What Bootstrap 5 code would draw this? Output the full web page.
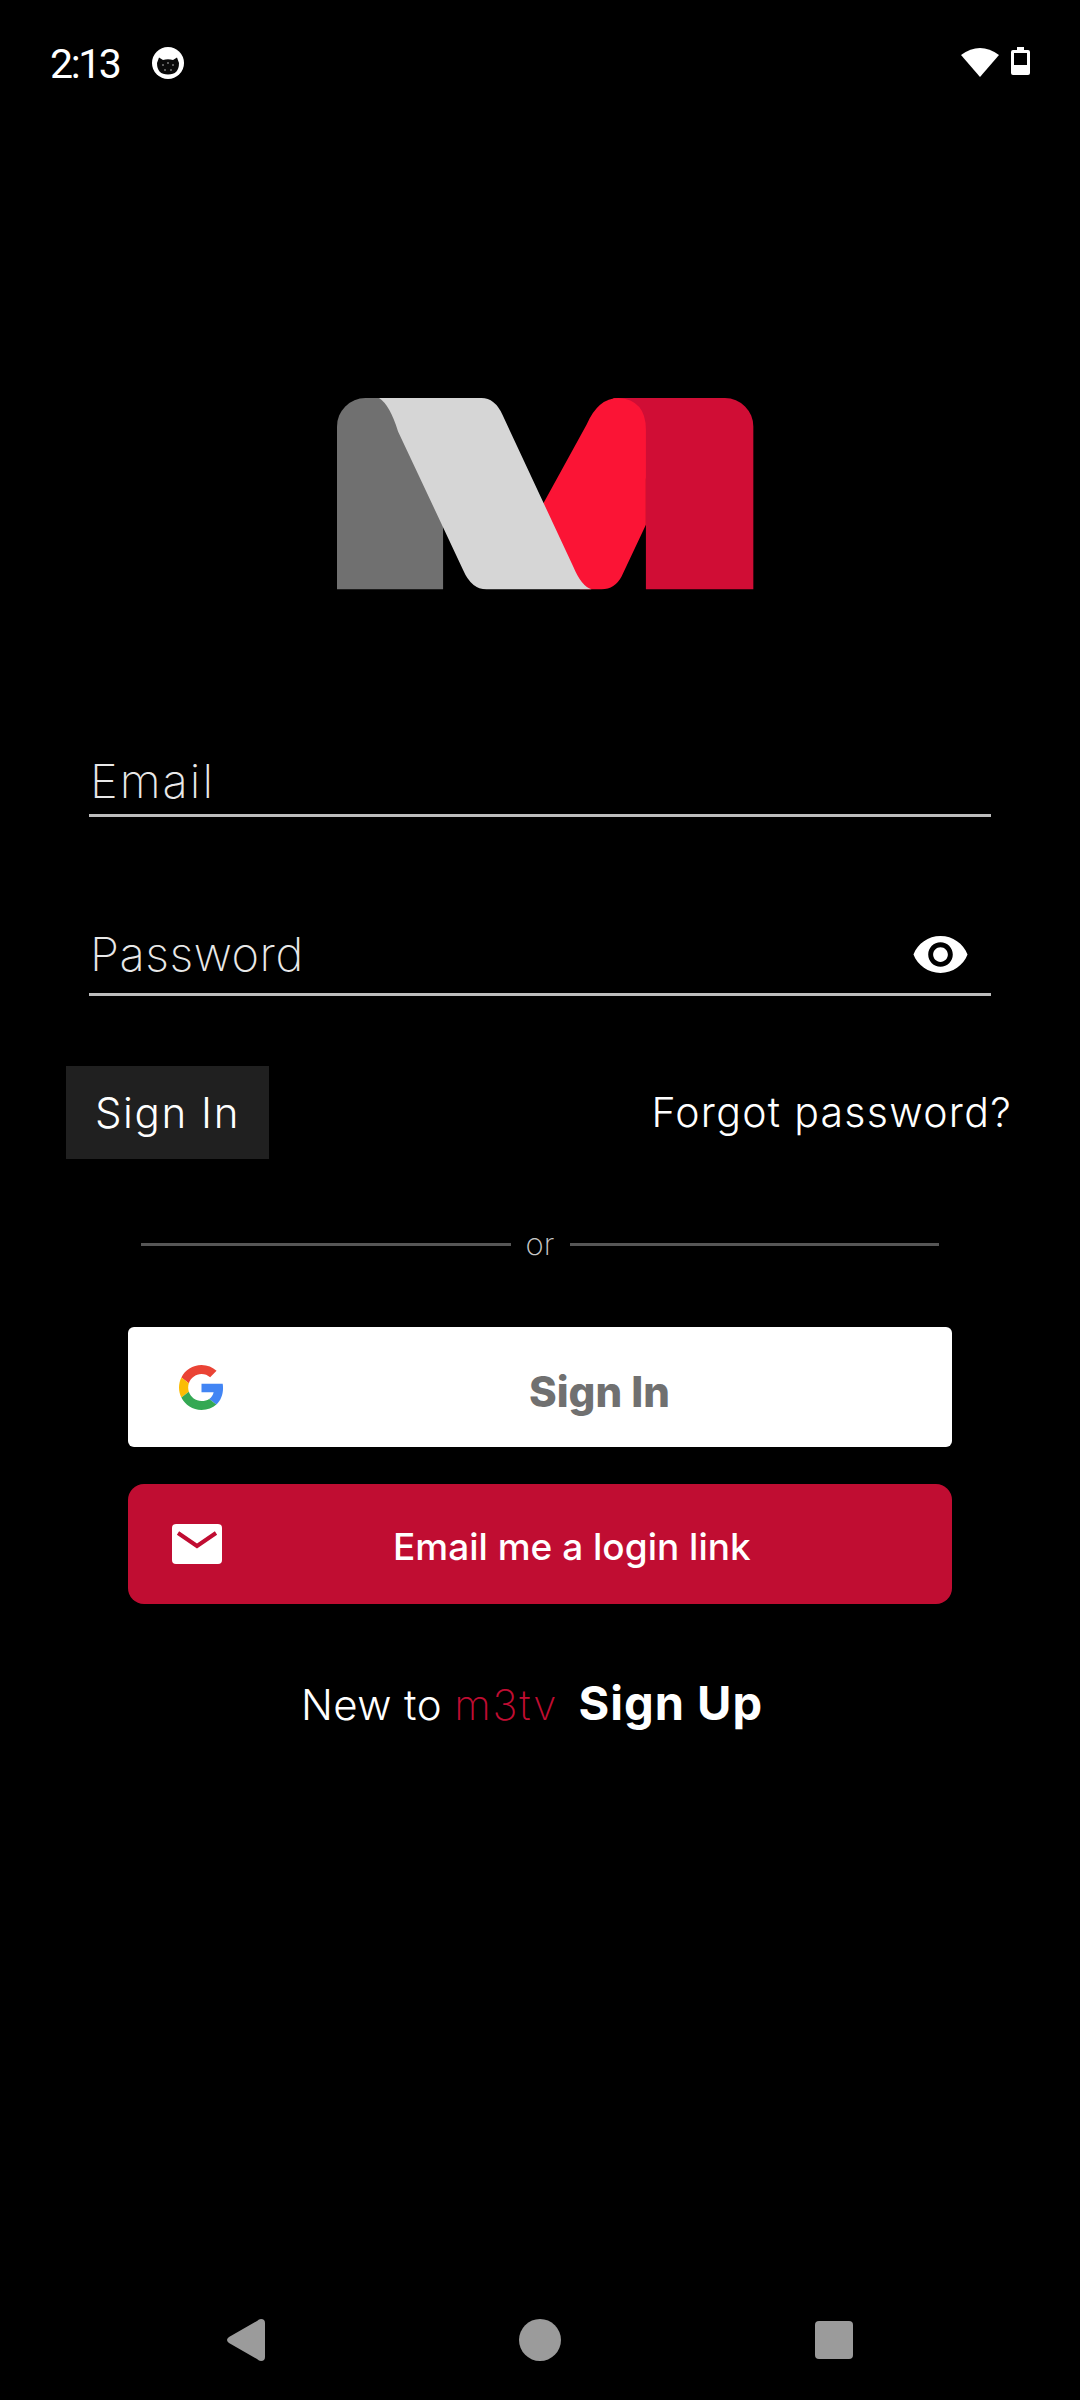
<!DOCTYPE html>
<html lang="en">
<head>
    <meta charset="UTF-8">
    <meta name="viewport" content="width=device-width, initial-scale=1.0">
    <title>m3tv Sign In</title>
    <link href="https://cdn.jsdelivr.net/npm/bootstrap@5.3.0/dist/css/bootstrap.min.css" rel="stylesheet">
    <style>
        body { background: #000; color: #fff; font-family: "Inter", "Liberation Sans", sans-serif; font-weight: 300; height: 2400px; overflow: hidden; }
        .screen { height: 2400px; }
        .status-bar { height: 120px; padding: 47px 50px 0 50px; }
        .clock { font-family: "Roboto", sans-serif; font-size: 41px; font-weight: 400; line-height: 34px; width: 102px; letter-spacing: -2.4px; }
        .logo-wrap { padding-top: 278px; height: 603px; padding-left: 337px; }
        .field-row { margin-left: 89px; width: 902px; border-bottom: 3px solid #bdbdbd; font-size: 47px; font-weight: 200; color: #e8e8e8; line-height: 60px; padding-left: 1px; }
        .field-email { height: 94px; padding-top: 28px; letter-spacing: 2px; }
        .field-password { margin-top: 98px; height: 81px; padding-top: 0; padding-right: 21px; letter-spacing: .5px; }
        .action-row { margin-top: 70px; padding-left: 66px; padding-right: 68px; }
        .btn-signin { background: #202020; color: #fff; border: 0; border-radius: 0; font-size: 42px; font-weight: 300; width: 203px; height: 93px; padding: 0; line-height: 1; letter-spacing: 1.6px; --bs-btn-hover-bg: #202020; --bs-btn-hover-color: #fff; }
        .forgot { font-size: 41px; color: #fff; text-decoration: none; letter-spacing: 1.3px; }
        .divider { margin-top: 65px; padding: 0 141px; height: 40px; color: #c8c8c8; font-size: 31px; font-weight: 200; }
        .divider-line { flex: 1; height: 3px; background: #565656; }
        .divider-text { width: 59px; text-align: center; line-height: 40px; }
        .wide-btn { width: 824px; height: 120px; margin-left: 128px; padding: 0; border: 0; }
        .btn-google { margin-top: 63px; background: #fff; color: #707070; border-radius: 6px; padding-left: 51px; font-weight: 800; font-size: 42px; --bs-btn-hover-bg: #fff; --bs-btn-hover-color: #707070; }
        .btn-google-label { margin-left: 305px; padding-top: 8px; }
        .btn-mail { margin-top: 37px; background: #c00d32; color: #fff; border-radius: 16px; padding-left: 44px; font-weight: 500; font-size: 37px; --bs-btn-hover-bg: #c00d32; --bs-btn-hover-color: #fff; }
        .btn-mail-label { margin-left: 171px; padding-top: 5px; }
        .signup-row { margin-top: 71px; padding-left: 301px; font-size: 42px; line-height: 56px; letter-spacing: .4px; }
        .brand-word { color: #c00d32; font-weight: 200; letter-spacing: 1.8px; }
        .signup-link { color: #fff; font-weight: 700; font-size: 47px; letter-spacing: 1px; text-decoration: none; margin-left: 8px; }
        .nav-bar { height: 82px; margin-bottom: 19px; }
    </style>
</head>
<body>
    <div class="screen d-flex flex-column">
        <div class="status-bar d-flex align-items-start flex-shrink-0">
            <div class="clock">2:13</div>
            <svg width="32" height="32" viewBox="0 0 32 32">
                <circle cx="16" cy="16" r="16" fill="#fff"/>
                <path d="M5 16 L7 10.500 L11 13 Q16 11.500 21 13 L25 10.500 L27 16 Q27 27.500 16 27.500 Q5 27.500 5 16 Z" fill="#0a0a0a"/>
                <g fill="#777"><circle cx="11" cy="18" r="1"/><circle cx="16" cy="16" r="1"/><circle cx="21" cy="18" r="1"/><circle cx="13" cy="23" r="1"/><circle cx="19" cy="23" r="1"/></g>
            </svg>
            <div class="ms-auto d-flex gap-2">
                <svg width="38" height="31" viewBox="0 0 38 31"><path d="M0 8 Q19 -6 38 8 L19 30 Z" fill="#fff"/></svg>
                <svg width="19" height="28" viewBox="0 0 19 28" class="ms-1"><path fill-rule="evenodd" d="M6 0 H13 V3 H17 Q19 3 19 5 V26 Q19 28 17 28 H2 Q0 28 0 26 V5 Q0 3 2 3 H6 Z M3 6 V18 H16 V6 Z" fill="#fff"/></svg>
            </div>
        </div>

        <div class="logo-wrap flex-shrink-0">
            <svg width="417" height="192" viewBox="52 55 1250 575">
                <path d="M880 55 H1215 A85 85 0 0 1 1300 140 V628 H978 V300 Z" fill="#d00d35"/>
                <path d="M660 390 L800 135 Q835 55 895 55 Q978 60 978 150 V435 L905 590 Q885 628 845 628 H780 Z" fill="#fb1435"/>
                <path d="M52 628 V140 A85 85 0 0 1 137 55 H250 L370 430 V628 Z" fill="#707070"/>
                <path d="M178 55 H485 Q525 55 548 105 L760 560 Q785 620 815 628 H500 Q455 628 430 570 L235 155 Q210 75 178 55 Z" fill="#d6d6d6"/>
            </svg>
        </div>

        <label class="field-row field-email d-block flex-shrink-0">Email</label>
        <div class="field-row field-password d-flex justify-content-between align-items-center flex-shrink-0">
            <label>Password</label>
            <svg width="59" height="59" viewBox="0 0 24 24"><path fill="#fff" d="M12 4.500C7 4.500 2.730 7.610 1 12c1.730 4.390 6 7.500 11 7.500s9.270-3.110 11-7.500c-1.730-4.390-6-7.500-11-7.500zM12 17c-2.760 0-5-2.240-5-5s2.240-5 5-5 5 2.240 5 5-2.240 5-5 5zm0-8c-1.660 0-3 1.340-3 3s1.340 3 3 3 3-1.340 3-3-1.340-3-3-3z"/></svg>
        </div>

        <div class="action-row d-flex justify-content-between align-items-center flex-shrink-0">
            <button type="button" class="btn btn-signin">Sign In</button>
            <a href="#" class="forgot">Forgot password?</a>
        </div>

        <div class="divider d-flex align-items-center flex-shrink-0">
            <div class="divider-line"></div>
            <div class="divider-text">or</div>
            <div class="divider-line"></div>
        </div>

        <button type="button" class="btn wide-btn btn-google d-flex align-items-center flex-shrink-0">
            <svg width="45" height="45" viewBox="0 0 48 48">
                <path fill="#EA4335" d="M24 9.500c3.540 0 6.710 1.220 9.210 3.600l6.850-6.850C35.900 2.380 30.470 0 24 0 14.620 0 6.510 5.380 2.560 13.220l7.980 6.190C12.430 13.720 17.740 9.500 24 9.500z"/>
                <path fill="#4285F4" d="M46.980 24.550c0-1.570-.15-3.090-.38-4.550H24v9.020h12.940c-.58 2.960-2.260 5.480-4.780 7.180l7.730 6c4.510-4.180 7.090-10.360 7.090-17.650z"/>
                <path fill="#FBBC05" d="M10.530 28.590c-.48-1.450-.76-2.990-.76-4.590s.27-3.140.76-4.590l-7.980-6.190C.92 16.460 0 20.120 0 24c0 3.880.92 7.540 2.560 10.780l7.970-6.190z"/>
                <path fill="#34A853" d="M24 48c6.480 0 11.930-2.130 15.890-5.810l-7.730-6c-2.150 1.450-4.920 2.300-8.160 2.300-6.260 0-11.570-4.220-13.470-9.910l-7.980 6.190C6.510 42.620 14.620 48 24 48z"/>
            </svg>
            <span class="btn-google-label">Sign In</span>
        </button>

        <button type="button" class="btn wide-btn btn-mail d-flex align-items-center flex-shrink-0">
            <svg width="50" height="40" viewBox="0 0 50 40">
                <rect width="50" height="40" rx="4" fill="#fff"/>
                <path d="M6 9 L25 22 L44 9" fill="none" stroke="#c00d32" stroke-width="4"/>
            </svg>
            <span class="btn-mail-label">Email me a login link</span>
        </button>

        <div class="signup-row flex-shrink-0">New to <span class="brand-word">m3tv</span> <a href="#" class="signup-link">Sign Up</a></div>

        <div class="nav-bar mt-auto flex-shrink-0 d-flex align-items-center">
            <svg width="1080" height="42" viewBox="0 0 1080 42">
                <path d="M261 0 Q265 0 265 4 V38 Q265 42 261 42 Q259 42 257 40 L229 24 Q225 21 229 18 L257 2 Q259 0 261 0 Z" fill="#9b9b9b"/>
                <ellipse cx="540" cy="21" rx="21" ry="21" fill="#9b9b9b"/>
                <rect x="815" y="2" width="38" height="38" rx="4" fill="#9b9b9b"/>
            </svg>
        </div>
    </div>
    <script src="https://cdn.jsdelivr.net/npm/bootstrap@5.3.0/dist/js/bootstrap.bundle.min.js"></script>
</body>
</html>
